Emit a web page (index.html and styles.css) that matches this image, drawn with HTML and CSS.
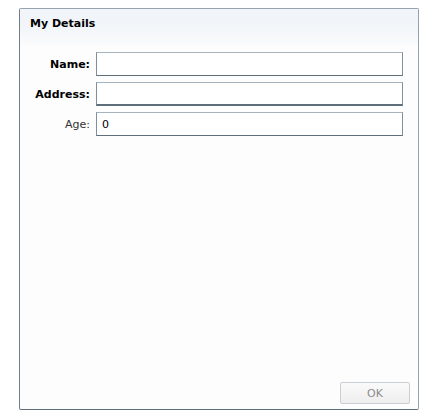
FILE: index.html
```html
<!DOCTYPE html>
<html lang="en">
<head>
  <meta charset="UTF-8" />
  <title>My Details</title>
  <link rel="stylesheet" href="styles.css">
</head>
<body>
  <div class="panel">
    <div class="panel-header">My Details</div>
    <div class="panel-body">
      <div class="form">
        <label class="bold" for="name">Name:</label>
        <input id="name" type="text" value="">
        <label class="bold" for="address">Address:</label>
        <input id="address" class="focused" type="text" value="">
        <label for="age">Age:</label>
        <input id="age" type="text" value="0">
      </div>
    </div>
    <div class="panel-footer">
      <button class="ok" disabled>OK</button>
    </div>
  </div>
</body>
</html>
```

FILE: styles.css
```css
* {
  box-sizing: border-box;
  margin: 0;
  padding: 0;
}
body {
  font-family: 'DejaVu Sans', Verdana, sans-serif;
  font-size: 11px;
  color: #000;
  background: #fff;
  padding: 8px 18px 8px 19px;
}
.panel {
  width: 400px;
  height: 402px;
  border: 1px solid #95a3b0;
  border-left-color: #6f7f8c;
  border-bottom-color: #5e6e7b;
  border-radius: 2px;
  display: flex;
  flex-direction: column;
  background: #fdfdfd;
}
.panel-header {
  height: 36px;
  padding: 8px 10px;
  font-weight: bold;
  font-size: 11px;
  background: linear-gradient(to bottom, #f1f5f9 0%, #f1f5f9 40%, #fafbfc 100%);
}
.panel-body {
  flex: 1;
  padding: 7px 15px 0 0;
}
.form {
  display: grid;
  grid-template-columns: 70px 1fr;
  column-gap: 6px;
  row-gap: 6px;
  align-items: center;
}
.form label {
  text-align: right;
  color: #333;
}
.form label.bold {
  font-weight: bold;
  color: #000;
}
.form input {
  height: 24px;
  font-family: inherit;
  font-size: 11px;
  padding: 0 5px;
  border: 1px solid #7f8f9c;
  border-top-color: #a7b4be;
  border-bottom-color: #5e6e7b;
  background: #fff;
  outline: none;
}
.form input.focused {
  border-bottom: 2px solid #5e6e7b;
}
.panel-footer {
  display: flex;
  justify-content: flex-end;
  padding: 0 8px 5px 0;
}
.ok {
  width: 70px;
  height: 22px;
  font-family: inherit;
  font-size: 11px;
  color: #8c8c8c;
  border: 1px solid #c9cfd4;
  border-radius: 2px;
  background: linear-gradient(to bottom, #fafafa, #eeeeee);
}
```
